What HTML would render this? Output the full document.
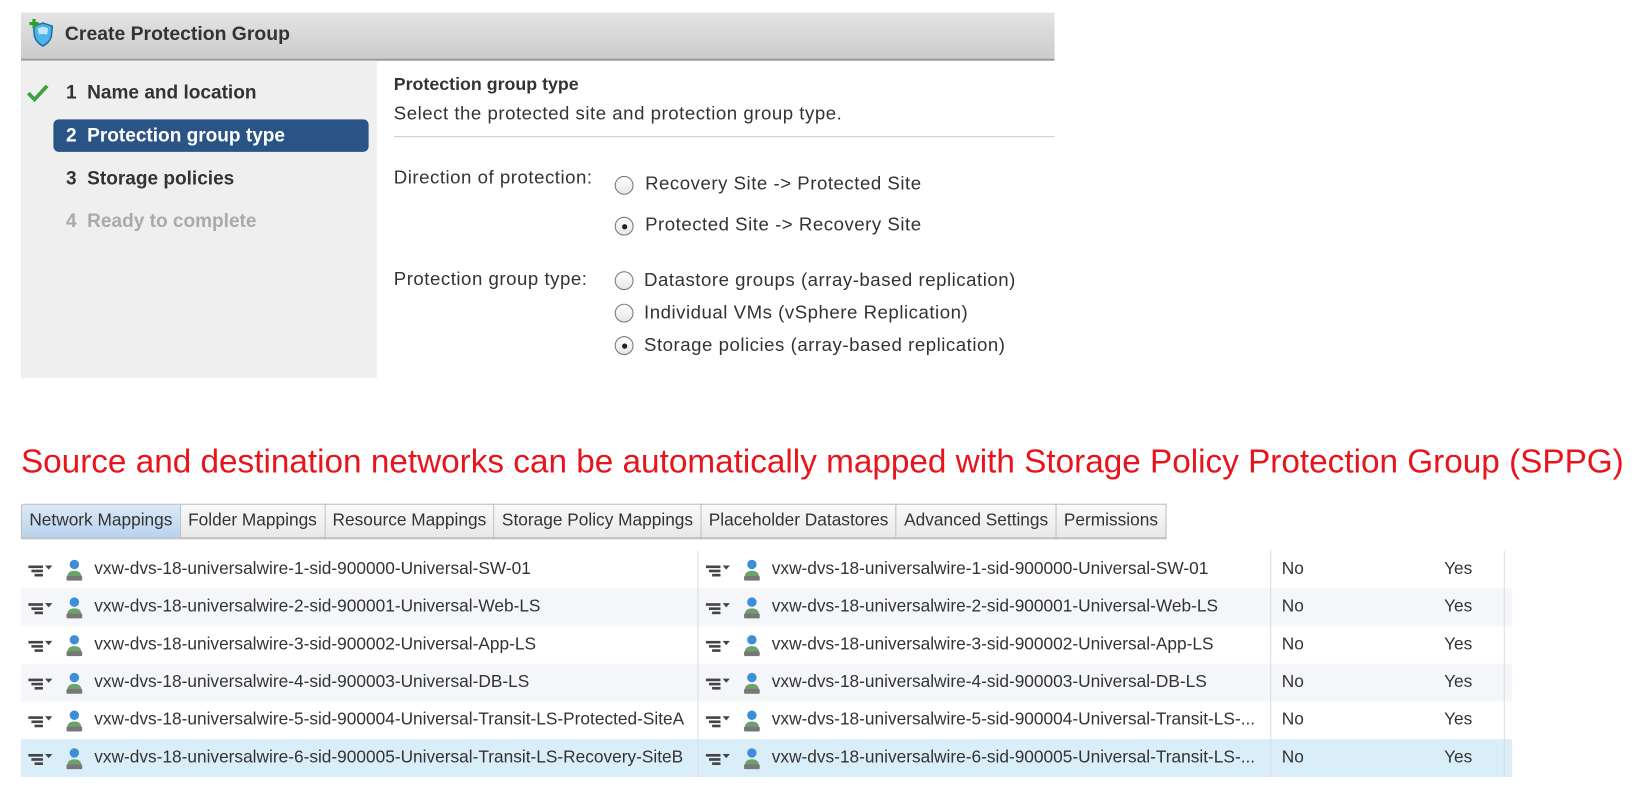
<!DOCTYPE html>
<html><head><meta charset="utf-8"><style>
body{margin:0;width:1642px;height:790px;background:#fff;font-family:"Liberation Sans",Arial,sans-serif;position:relative;overflow:hidden;color:#333}
#w{position:absolute;left:0;top:0;width:1568px;height:755px;transform:scale(1.0472);transform-origin:0 0}
.a{position:absolute;white-space:nowrap}
.hdr{left:20px;top:12px;width:987px;height:44px;background:linear-gradient(#e4e4e4,#cbcbcb);border-bottom:2px solid #9a9a9a}
.side{left:20px;top:58px;width:340px;height:303px;background:#efefef}
.step{font-size:18.2px;font-weight:bold;color:#333}
.sel{left:51px;top:114px;width:301px;height:31px;background:#2a5485;border-radius:5px}
.lbl{font-size:17.8px;color:#333;letter-spacing:0.5px}
.rad{width:18px;height:18px;border:1px solid #777;border-radius:50%;background:linear-gradient(#fff,#e6e6e6);box-sizing:border-box}
.rad.on::after{content:"";position:absolute;left:5.5px;top:5.5px;width:5px;height:5px;border-radius:50%;background:#222}
.red{left:20px;top:422px;font-size:31.8px;color:#e8141b}
.tabs{left:20px;top:481px;height:33px;display:flex;border-bottom:1px solid #bbb}
.tab{font-size:16.5px;color:#333;padding:0 7px;line-height:31px;border:1px solid #bbb;border-left:none;background:linear-gradient(#fafafa,#e8e8e8)}
.tab.f{border-left:1px solid #bbb;background:linear-gradient(#dde9f6,#b8d3ef);border-radius:3px 0 0 0}
.row{left:20px;width:1424px;height:36px}
.cell{font-size:16.5px;color:#333}
.vl{top:526px;width:1px;height:216px;background:#ddd}
</style></head><body><div id="w">
<div class="a hdr"></div>
<svg class="a" style="left:28px;top:18px" width="26" height="28" viewBox="0 0 26 28"><path d="M4 7 L13 4 L22 7 L21 17 Q19 23 13 26 Q7 23 5 17 Z" fill="#4db3e8" stroke="#1f6fa8" stroke-width="1.5"/><path d="M8 9 L13 7.5 L18 9 L17 15 Q13 14 9 15Z" fill="#bfe6fa"/><rect x="3" y="0" width="3" height="9" fill="#2ea02e"/><rect x="0" y="3" width="9" height="3" fill="#2ea02e"/></svg>
<div class="a" style="left:62px;top:21px;font-size:18.5px;font-weight:bold;color:#333">Create Protection Group</div>
<div class="a side"></div>
<svg class="a" style="left:25px;top:80px" width="22" height="18"><path d="M2 9 L8 15 L20 2" fill="none" stroke="#3ca03c" stroke-width="3.5"/></svg>
<div class="a step" style="left:63px;top:78px">1&nbsp; Name and location</div>
<div class="a sel"></div>
<div class="a step" style="left:63px;top:119px;color:#fff">2&nbsp; Protection group type</div>
<div class="a step" style="left:63px;top:160px">3&nbsp; Storage policies</div>
<div class="a step" style="left:63px;top:201px;color:#aaa">4&nbsp; Ready to complete</div>
<div class="a" style="left:376px;top:71px;font-size:17px;font-weight:bold;color:#333">Protection group type</div>
<div class="a lbl" style="left:376px;top:98px">Select the protected site and protection group type.</div>
<div class="a" style="left:376px;top:130px;width:631px;height:1px;background:#ccc"></div>
<div class="a lbl" style="left:376px;top:159px">Direction of protection:</div>
<div class="a rad" style="left:587px;top:168px"></div><div class="a lbl" style="left:616px;top:165px">Recovery Site -&gt; Protected Site</div>
<div class="a rad on" style="left:587px;top:207px"></div><div class="a lbl" style="left:616px;top:204px">Protected Site -&gt; Recovery Site</div>
<div class="a lbl" style="left:376px;top:256px">Protection group type:</div>
<div class="a rad" style="left:587px;top:259px"></div><div class="a lbl" style="left:615px;top:257px">Datastore groups (array-based replication)</div>
<div class="a rad" style="left:587px;top:290px"></div><div class="a lbl" style="left:615px;top:288px">Individual VMs (vSphere Replication)</div>
<div class="a rad on" style="left:587px;top:321px"></div><div class="a lbl" style="left:615px;top:319px">Storage policies (array-based replication)</div>
<div class="a red">Source and destination networks can be automatically mapped with Storage Policy Protection Group (SPPG)</div>
<div class="a tabs"><div class="tab f">Network Mappings</div><div class="tab">Folder Mappings</div><div class="tab">Resource Mappings</div><div class="tab">Storage Policy Mappings</div><div class="tab">Placeholder Datastores</div><div class="tab">Advanced Settings</div><div class="tab">Permissions</div></div>
<div class="a row" style="top:562px;background:#f4f6f9"></div>
<div class="a row" style="top:634px;background:#f4f6f9"></div>
<div class="a row" style="top:706px;background:#d9eef9"></div>
<div class="a vl" style="left:666px"></div><div class="a vl" style="left:1213px"></div><div class="a vl" style="left:1436px"></div>
<div id="rows"></div>
</div>
<script>
const L=["vxw-dvs-18-universalwire-1-sid-900000-Universal-SW-01","vxw-dvs-18-universalwire-2-sid-900001-Universal-Web-LS","vxw-dvs-18-universalwire-3-sid-900002-Universal-App-LS","vxw-dvs-18-universalwire-4-sid-900003-Universal-DB-LS","vxw-dvs-18-universalwire-5-sid-900004-Universal-Transit-LS-Protected-SiteA","vxw-dvs-18-universalwire-6-sid-900005-Universal-Transit-LS-Recovery-SiteB"];
const R=[L[0],L[1],L[2],L[3],"vxw-dvs-18-universalwire-5-sid-900004-Universal-Transit-LS-...","vxw-dvs-18-universalwire-6-sid-900005-Universal-Transit-LS-..."];
const ic=x=>`<svg class="a" style="left:${x}px;top:0" width="60" height="24"><g fill="#444"><rect x="0" y="7" width="14" height="2.5"/><rect x="3" y="11" width="11" height="2.5"/><rect x="6" y="15" width="8" height="2.5"/><path d="M16 7h7l-3.5 4z"/></g><circle cx="44" cy="6" r="4.5" fill="#3a8fd8"/><path d="M37 19 Q37 12 44 12 Q51 12 51 19Z" fill="#6aa26a"/><rect x="36.5" y="17" width="15" height="4.5" rx="1" fill="#777"/></svg>`;
let h="";for(let i=0;i<6;i++){const t=533+36*i;h+=`<div class="a" style="left:0;top:${t}px;width:1568px;height:24px">${ic(27)}<div class="a cell" style="left:90px;top:1px">${L[i]}</div>${ic(674)}<div class="a cell" style="left:737px;top:1px">${R[i]}</div><div class="a cell" style="left:1224px;top:1px">No</div><div class="a cell" style="left:1379px;top:1px">Yes</div></div>`}
document.getElementById("rows").innerHTML=h;
</script>
</body></html>
